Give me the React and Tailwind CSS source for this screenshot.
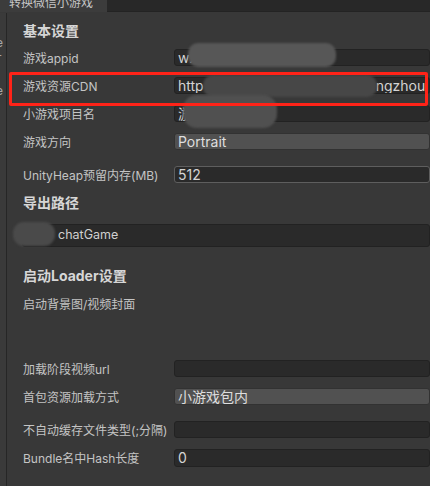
import React from "react";

const FONT = { fontFamily: 'Inter, "Noto Sans CJK SC", sans-serif' };

function Label({ children }) {
  return (
    <div className="w-[151px] shrink-0 pt-[2px] text-[12px] leading-none text-[#c4c4c4] whitespace-nowrap">
      {children}
    </div>
  );
}

function Field({ children, className = "", border = "border-[#222222]" }) {
  return (
    <div
      className={`flex-1 h-full bg-[#2a2a2a] border ${border} rounded-[3px] flex items-center pl-[3px] text-[14px] leading-none text-[#d4d4d4] whitespace-nowrap overflow-hidden ${className}`}
    >
      {children}
    </div>
  );
}

function Dropdown({ children }) {
  return (
    <div className="flex-1 h-full bg-[#515151] border border-[#323232] rounded-[3px] flex items-center pl-[3px] text-[14px] leading-none text-[#dedede] whitespace-nowrap overflow-hidden">
      {children}
    </div>
  );
}

function Row({ mt, h = "h-[17px]", children }) {
  return (
    <div className={`flex items-center ${h} ${mt}`}>{children}</div>
  );
}

function Header({ mt, children }) {
  return (
    <div className={`h-[20px] flex items-center ${mt} text-[14px] font-bold leading-none text-[#d6d6d6] whitespace-nowrap`}>
      {children}
    </div>
  );
}

export default function App() {
  return (
    <div
      className="relative w-[430px] h-[486px] overflow-hidden bg-[#383838] flex flex-col"
      style={FONT}
    >
      {/* tab bar */}
      <div className="h-[12px] shrink-0 flex bg-[#282828] overflow-hidden">
        <div className="w-[107px] h-full bg-[#3c3c3c] pl-[9px] overflow-hidden">
          <div className="mt-[-3px] text-[12px] leading-[12px] text-[#c6c6c6] whitespace-nowrap">
            转换微信小游戏
          </div>
        </div>
        <div className="flex-1 border-b border-[#232323]" />
      </div>

      <div className="flex flex-1 min-h-0 pt-[1px]">
        {/* left strip */}
        <div className="w-[7px] shrink-0 bg-[#3a3a3a] border-r border-[#262626] overflow-hidden flex flex-col items-start text-[12px] leading-none text-[#a8a8a8]">
          <div className="mt-[24px] ml-[-4px] whitespace-nowrap">e</div>
          <div className="mt-[3px] ml-[-3px] whitespace-nowrap">r</div>
          <div className="mt-[21px] ml-[-4px] whitespace-nowrap">e</div>
        </div>

        {/* content */}
        <div className="flex-1 flex flex-col pl-[16px] min-w-0">
          <Header mt="mt-[8px]">基本设置</Header>

          <Row mt="mt-[8px]">
            <Label>游戏appid</Label>
            <Field>wx</Field>
          </Row>
          <Row mt="mt-[11px]">
            <Label>游戏资源CDN</Label>
            <Field>
              <span>http</span>
              <span className="ml-[172px]">ngzhou</span>
            </Field>
          </Row>
          <Row mt="mt-[11px]">
            <Label>小游戏项目名</Label>
            <Field>游戏</Field>
          </Row>
          <Row mt="mt-[11px]">
            <Label>游戏方向</Label>
            <Dropdown>Portrait</Dropdown>
          </Row>
          <Row mt="mt-[16px]">
            <Label>UnityHeap预留内存(MB)</Label>
            <Field border="border-[#5e5e5e]">512</Field>
          </Row>

          <Header mt="mt-[10px]">导出路径</Header>

          <div className="mt-[11px] h-[23px] ml-[-1px] flex">
            <div className="flex-1 h-full bg-[#2a2a2a] border border-[#222222] rounded-[3px] flex items-center pl-[2px] text-[12.5px] leading-none text-[#d0d0d0] whitespace-nowrap overflow-hidden">
              <span className="w-[33px] shrink-0">E</span>
              <span>chatGame</span>
            </div>
          </div>

          <Header mt="mt-[19px]">启动Loader设置</Header>

          <Row mt="mt-[9px]">
            <Label>启动背景图/视频封面</Label>
          </Row>

          <Row mt="mt-[48px]">
            <Label>加载阶段视频url</Label>
            <Field />
          </Row>
          <Row mt="mt-[11px]">
            <Label>首包资源加载方式</Label>
            <Dropdown>小游戏包内</Dropdown>
          </Row>
          <Row mt="mt-[16px]">
            <Label>不自动缓存文件类型(;分隔)</Label>
            <Field />
          </Row>
          <Row mt="mt-[11px]" h="h-[18px]">
            <Label>Bundle名中Hash长度</Label>
            <Field>0</Field>
          </Row>
        </div>
      </div>

      {/* privacy blurs */}
      <div className="absolute left-[188px] top-[43px] w-[148px] h-[24px] rounded-[10px] bg-[#575757] blur-[1px]" />
      <div className="absolute left-[203px] top-[75px] w-[174px] h-[22px] rounded-[10px] bg-[#474747] blur-[1px]" />
      <div className="absolute left-[183px] top-[95px] w-[94px] h-[33px] rounded-[14px] bg-[#505050] blur-[1px]" />
      <div className="absolute left-[13px] top-[222px] w-[42px] h-[24px] rounded-[11px] bg-[#4a4a4a] blur-[1px]" />

      {/* red highlight */}
      <div className="absolute left-[9px] top-[72px] w-[419px] h-[34px] border-[3px] border-[#ff2318] rounded-[2px]" />
    </div>
  );
}
